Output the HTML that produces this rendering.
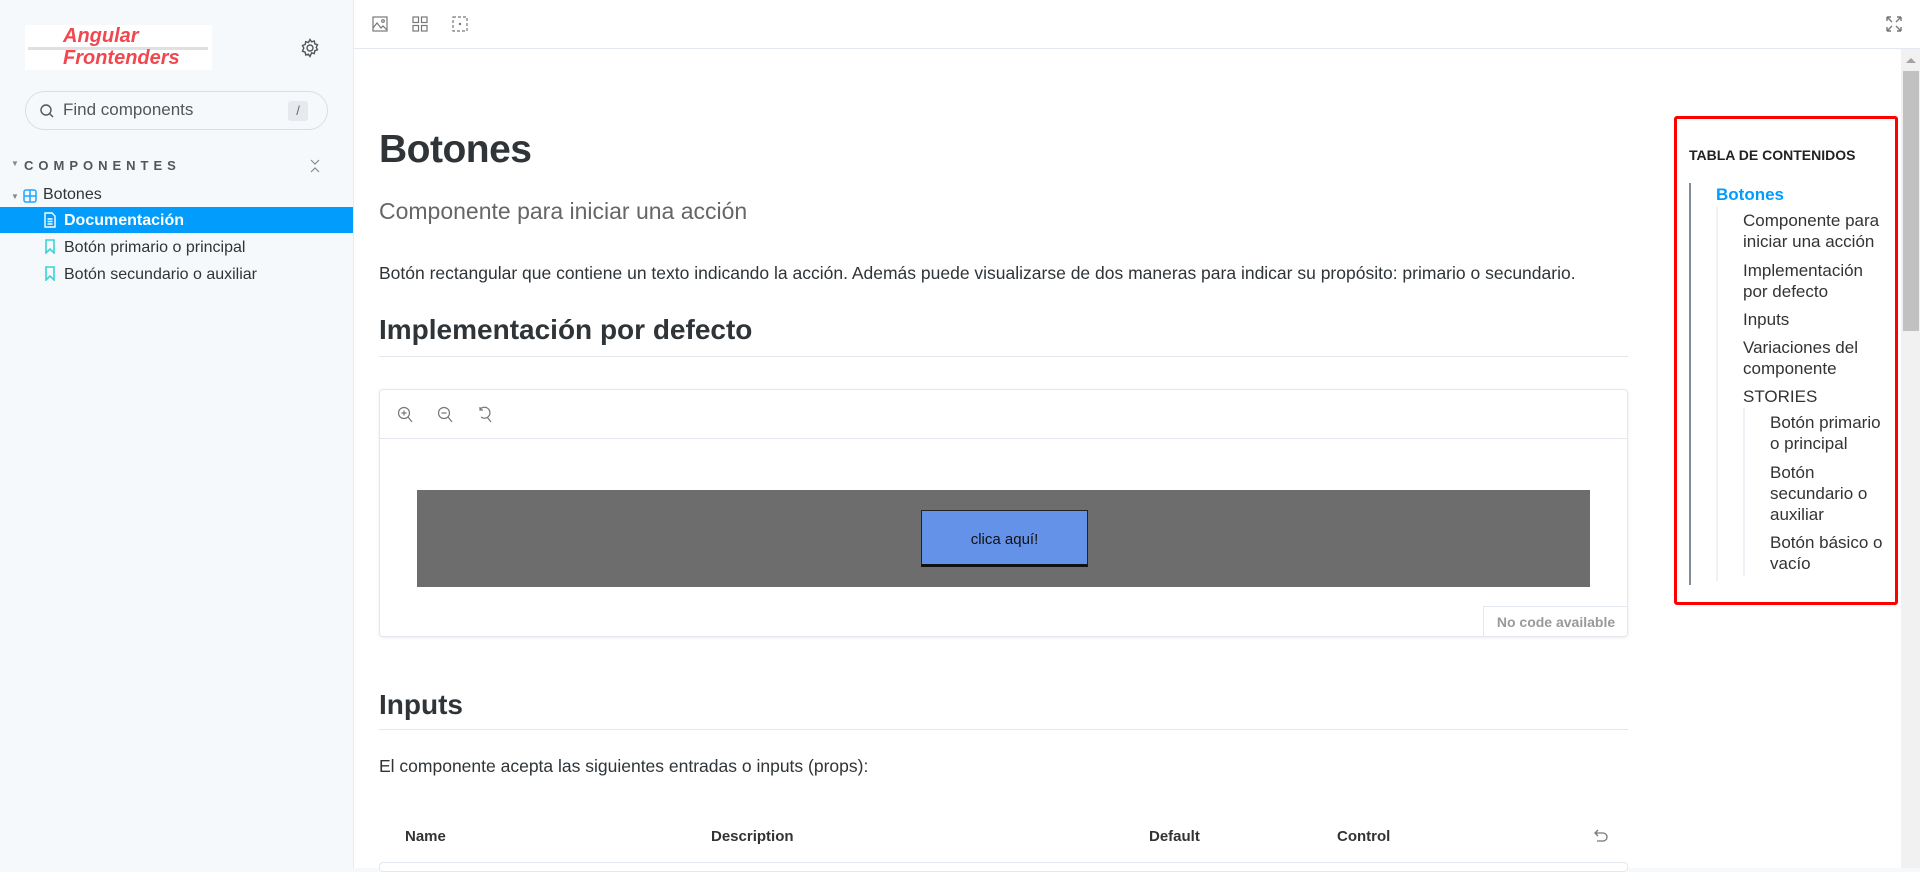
<!DOCTYPE html>
<html><head><meta charset="utf-8">
<style>
*{box-sizing:border-box;margin:0;padding:0}
body{width:1920px;height:868px;overflow:hidden;font-family:"Liberation Sans",sans-serif;background:#f6f9fc;position:relative;color:#2e3438}
.a{position:absolute;white-space:nowrap}
#side{position:absolute;left:0;top:0;width:353px;height:868px;background:#f6f9fc}
#main{position:absolute;left:353px;top:0;width:1567px;height:868px;background:#fff;border-left:1px solid #e6ebf0}
#tb{position:absolute;left:0;top:0;width:1567px;height:49px;border-bottom:1px solid #e3e8ee;background:#fff}
.toc{font-size:17px;color:#333;line-height:21px}
</style></head><body>
<div id="side">
  <div class="a" style="left:25px;top:25px;width:187px;height:45px;background:#fff"></div>
  <div class="a" style="left:28px;top:47px;width:180px;height:3px;background:#ccc;opacity:.6"></div>
  <div class="a" style="left:63px;top:25px;font:italic bold 20px 'Liberation Sans',sans-serif;color:#f0484e;line-height:22px">Angular<br>Frontenders</div>
  <svg class="a" style="left:300px;top:38px" width="20" height="20" viewBox="0 0 20 20" fill="none" stroke="#555" stroke-width="1.4"><circle cx="10" cy="10" r="3"/><path d="M10 1.5l1.6 2.3 2.7-.8.5 2.8 2.7 1-1.3 2.5 1.3 2.5-2.7 1-.5 2.8-2.7-.8L10 18.5l-1.6-2.3-2.7.8-.5-2.8-2.7-1L3.8 10 2.5 7.5l2.7-1 .5-2.8 2.7.8z"/></svg>
  <div class="a" style="left:25px;top:91px;width:303px;height:39px;border:1px solid #d8dee4;border-radius:20px;background:#f6f9fc"></div>
  <svg class="a" style="left:39px;top:103px" width="16" height="16" viewBox="0 0 16 16" fill="none" stroke="#555" stroke-width="1.4"><circle cx="7" cy="7" r="5"/><path d="M10.6 10.6L14 14"/></svg>
  <div class="a" style="left:63px;top:100px;font-size:17px;color:#555">Find components</div>
  <div class="a" style="left:288px;top:101px;width:20px;height:20px;background:#e6e9ed;border-radius:3px;font-size:13px;color:#666;text-align:center;line-height:20px">/</div>
  <div class="a" style="left:11px;top:159px;font-size:8px;color:#888">▼</div>
  <div class="a" style="left:24px;top:158px;font-size:13px;font-weight:bold;letter-spacing:5px;color:#555">COMPONENTES</div>
  <svg class="a" style="left:309px;top:158px" width="12" height="16" viewBox="0 0 12 16" fill="none" stroke="#888" stroke-width="1.2"><path d="M2 2l4 4 4-4M2 14l4-4 4 4"/></svg>
  <div class="a" style="left:11px;top:192px;font-size:8px;color:#888">▼</div>
  <svg class="a" style="left:23px;top:189px" width="14" height="14" viewBox="0 0 14 14" fill="none" stroke="#1ea7fd" stroke-width="1.5"><rect x="1" y="1" width="12" height="12" rx="2"/><path d="M7 1v12M1 7h12"/></svg>
  <div class="a" style="left:43px;top:186px;font-size:16px;color:#333">Botones</div>
  <div class="a" style="left:0;top:207px;width:353px;height:26px;background:#029cfd"></div>
  <svg class="a" style="left:43px;top:212px" width="14" height="16" viewBox="0 0 14 16" fill="none" stroke="#fff" stroke-width="1.4"><path d="M2 1h7l3 3v11H2z M4.5 7h5M4.5 9.5h5M4.5 12h5"/></svg>
  <div class="a" style="left:64px;top:212px;font-size:16px;font-weight:bold;color:#fff">Documentación</div>
  <svg class="a" style="left:45px;top:239px" width="10" height="15" viewBox="0 0 10 15" fill="none" stroke="#37d5d3" stroke-width="1.6"><path d="M1 1h8v13L5 10 1 14z"/></svg>
  <div class="a" style="left:64px;top:239px;font-size:16px;color:#333">Botón primario o principal</div>
  <svg class="a" style="left:45px;top:266px" width="10" height="15" viewBox="0 0 10 15" fill="none" stroke="#37d5d3" stroke-width="1.6"><path d="M1 1h8v13L5 10 1 14z"/></svg>
  <div class="a" style="left:64px;top:266px;font-size:16px;color:#333">Botón secundario o auxiliar</div>
</div>
<div id="main">
  <div id="tb">
    <svg class="a" style="left:18px;top:16px" width="16" height="16" viewBox="0 0 16 16" fill="none" stroke="#777" stroke-width="1.2"><rect x="1" y="1" width="14" height="14"/><path d="M1 12l4-5 4 5 2-2 4 4"/><circle cx="11" cy="5" r="1.3"/></svg>
    <svg class="a" style="left:58px;top:16px" width="16" height="16" viewBox="0 0 16 16" fill="none" stroke="#777" stroke-width="1.2"><rect x="1" y="1" width="5.5" height="5.5"/><rect x="9.5" y="1" width="5.5" height="5.5"/><rect x="1" y="9.5" width="5.5" height="5.5"/><rect x="9.5" y="9.5" width="5.5" height="5.5"/></svg>
    <svg class="a" style="left:98px;top:16px" width="16" height="16" viewBox="0 0 16 16" fill="none" stroke="#777" stroke-width="1.2" stroke-dasharray="3 2"><rect x="1" y="1" width="14" height="14"/><circle cx="8" cy="8" r=".6" stroke-dasharray="0" fill="#777"/></svg>
    <svg class="a" style="left:1532px;top:16px" width="16" height="16" viewBox="0 0 16 16" fill="none" stroke="#777" stroke-width="1.4"><path d="M1 1l5 5M1 1v4M1 1h4M15 1l-5 5M15 1v4M15 1h-4M1 15l5-5M1 15v-4M1 15h4M15 15l-5-5M15 15v-4M15 15h-4"/></svg>
  </div>
  <div class="a" style="left:25px;top:128px;font-size:39px;font-weight:bold;color:#2e3438;letter-spacing:-0.5px">Botones</div>
  <div class="a" style="left:25px;top:198px;font-size:23px;color:#666">Componente para iniciar una acción</div>
  <div class="a" style="left:25px;top:263px;font-size:17.5px;color:#2e3438">Botón rectangular que contiene un texto indicando la acción. Además puede visualizarse de dos maneras para indicar su propósito: primario o secundario.</div>
  <div class="a" style="left:25px;top:314px;font-size:28px;font-weight:bold;color:#2e3438">Implementación por defecto</div>
  <div class="a" style="left:25px;top:356px;width:1249px;height:1px;background:#e3e8ee"></div>
  <div class="a" style="left:25px;top:389px;width:1249px;height:248px;border:1px solid #e3e8ee;border-radius:4px;box-shadow:0 1px 3px rgba(0,0,0,.08)"></div>
  <div class="a" style="left:26px;top:438px;width:1247px;height:1px;background:#e3e8ee"></div>
  <svg class="a" style="left:43px;top:406px" width="16" height="18" viewBox="0 0 16 18" fill="none" stroke="#777" stroke-width="1.2"><circle cx="7" cy="7" r="5.5"/><path d="M11 11l4 5M7 4.5v5M4.5 7h5"/></svg>
  <svg class="a" style="left:83px;top:406px" width="16" height="18" viewBox="0 0 16 18" fill="none" stroke="#777" stroke-width="1.2"><circle cx="7" cy="7" r="5.5"/><path d="M11 11l4 5M4.5 7h5"/></svg>
  <svg class="a" style="left:123px;top:406px" width="16" height="18" viewBox="0 0 16 18" fill="none" stroke="#777" stroke-width="1.2"><path d="M3 3.5A5.5 5.5 0 1 1 4 11M3 1v3h3M10 11l4 5"/></svg>
  <div class="a" style="left:63px;top:490px;width:1173px;height:97px;background:#6d6d6d"></div>
  <div class="a" style="left:567px;top:510px;width:167px;height:57px;background:#6592e9;border:1px solid #222;border-bottom:3px solid #111;font-size:15px;color:#111;text-align:center;line-height:58px">clica aquí!</div>
  <div class="a" style="left:1129px;top:606px;width:145px;height:31px;border-left:1px solid #e3e8ee;border-top:1px solid #e3e8ee;font-size:14px;font-weight:bold;color:#999;text-align:center;line-height:30px">No code available</div>
  <div class="a" style="left:25px;top:689px;font-size:28px;font-weight:bold;color:#2e3438">Inputs</div>
  <div class="a" style="left:25px;top:729px;width:1249px;height:1px;background:#e3e8ee"></div>
  <div class="a" style="left:25px;top:756px;font-size:17.5px;color:#2e3438">El componente acepta las siguientes entradas o inputs (props):</div>
  <div class="a" style="left:51px;top:828px;font-size:15px;font-weight:bold;color:#333">Name</div>
  <div class="a" style="left:357px;top:828px;font-size:15px;font-weight:bold;color:#333">Description</div>
  <div class="a" style="left:795px;top:828px;font-size:15px;font-weight:bold;color:#333">Default</div>
  <div class="a" style="left:983px;top:828px;font-size:15px;font-weight:bold;color:#333">Control</div>
  <svg class="a" style="left:1239px;top:828px" width="16" height="16" viewBox="0 0 16 16" fill="none" stroke="#777" stroke-width="1.3"><path d="M5 2L2 5l3 3M2 5h8a4 4 0 0 1 0 8H4"/></svg>
  <div class="a" style="left:25px;top:862px;width:1249px;height:10px;border:1px solid #e3e8ee;border-radius:4px;background:#fff"></div>
  <div class="a" style="left:1320px;top:116px;width:224px;height:489px;border:3px solid #f00;border-radius:3px"></div>
  <div class="a" style="left:1335px;top:147px;font-size:14px;font-weight:bold;color:#222">TABLA DE CONTENIDOS</div>
  <div class="a" style="left:1335px;top:183px;width:2px;height:402px;background:#7f8c99"></div>
  <div class="a" style="left:1362px;top:207px;width:2px;height:374px;background:#eef2f6"></div>
  <div class="a" style="left:1389px;top:408px;width:2px;height:168px;background:#eef2f6"></div>
  <div class="a" style="left:1362px;top:185px;font-size:17px;font-weight:bold;color:#029cfd">Botones</div>
  <div class="a toc" style="left:1389px;top:210px">Componente para<br>iniciar una acción</div>
  <div class="a toc" style="left:1389px;top:260px">Implementación<br>por defecto</div>
  <div class="a toc" style="left:1389px;top:309px">Inputs</div>
  <div class="a toc" style="left:1389px;top:337px">Variaciones del<br>componente</div>
  <div class="a toc" style="left:1389px;top:386px">STORIES</div>
  <div class="a toc" style="left:1416px;top:412px">Botón primario<br>o principal</div>
  <div class="a toc" style="left:1416px;top:462px">Botón<br>secundario o<br>auxiliar</div>
  <div class="a toc" style="left:1416px;top:532px">Botón básico o<br>vacío</div>
  <div class="a" style="left:1547px;top:49px;width:20px;height:819px;background:#f1f1f1"></div>
  <div class="a" style="left:1552px;top:58px;width:0;height:0;border-left:5px solid transparent;border-right:5px solid transparent;border-bottom:5px solid #a3a3a3"></div>
  <div class="a" style="left:1549px;top:71px;width:16px;height:260px;background:#c1c1c1"></div>
</div>
</body></html>
